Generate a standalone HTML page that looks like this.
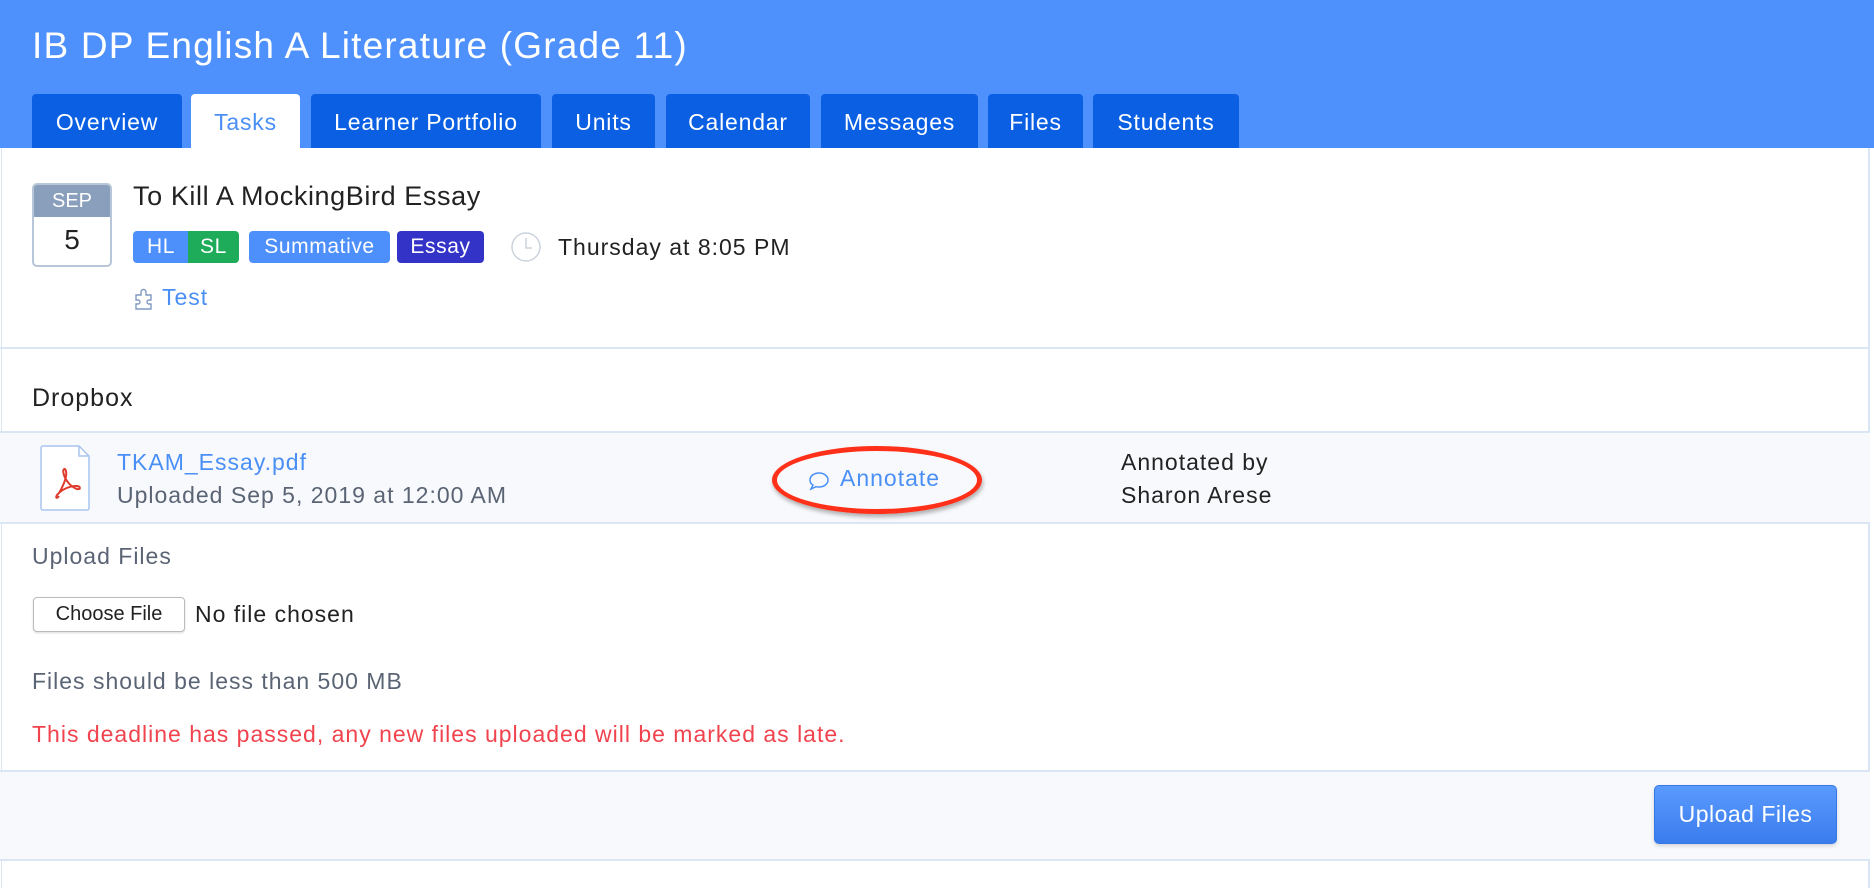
<!DOCTYPE html>
<html><head><meta charset="utf-8"><style>
*{box-sizing:border-box;margin:0;padding:0}
body{width:1874px;height:888px;background:#fff;font-family:"Liberation Sans",sans-serif;position:relative;overflow:hidden;color:#222}
.a{position:absolute;white-space:nowrap}
.t{font-size:23px;letter-spacing:1px}
.hdr{position:absolute;left:0;top:0;width:1874px;height:148px;background:#4f91fc}
.tab{position:absolute;top:94px;height:54px;background:#0a5fe3;color:#fff;font-size:23px;letter-spacing:.8px;line-height:56px;text-align:center;border-radius:4px 4px 0 0}
.tab.on{background:#fff;color:#4a8ff5}
.badge{position:absolute;top:231px;height:32px;color:#fff;font-size:21px;letter-spacing:.6px;line-height:32px;text-align:center}
</style></head><body>
<div class="hdr"></div>
<div class="a" style="left:32px;top:25px;font-size:37px;letter-spacing:1.2px;color:#fff">IB DP English A Literature (Grade 11)</div>
<div class="tab" style="left:32px;width:150px">Overview</div>
<div class="tab on" style="left:191px;width:109px">Tasks</div>
<div class="tab" style="left:311px;width:230px">Learner Portfolio</div>
<div class="tab" style="left:552px;width:103px">Units</div>
<div class="tab" style="left:666px;width:144px">Calendar</div>
<div class="tab" style="left:821px;width:157px">Messages</div>
<div class="tab" style="left:988px;width:95px">Files</div>
<div class="tab" style="left:1093px;width:146px">Students</div>
<div class="a" style="left:1px;top:148px;width:1px;height:740px;background:#dbe6f5"></div>
<div class="a" style="left:1868px;top:148px;width:2px;height:740px;background:#dbe6f5"></div>

<div class="a" style="left:32px;top:183px;width:80px;height:84px;border:2px solid #b8c6da;border-radius:5px;overflow:hidden;background:#fff">
<div style="background:#899fbb;height:32px;color:#fff;font-size:20px;line-height:32px;text-align:center">SEP</div>
<div style="font-size:28px;text-align:center;line-height:46px">5</div></div>
<div class="a" style="left:133px;top:181px;font-size:27px;letter-spacing:.6px">To Kill A MockingBird Essay</div>
<div class="badge" style="left:133px;width:56px;background:#4d8ffb;border-radius:4px 0 0 4px">HL</div>
<div class="badge" style="left:188px;width:51px;background:#1fac5a;border-radius:0 4px 4px 0">SL</div>
<div class="badge" style="left:249px;width:141px;background:#4d8ffb;border-radius:4px">Summative</div>
<div class="badge" style="left:397px;width:87px;background:#3333c8;border-radius:4px">Essay</div>
<svg class="a" style="left:510px;top:231px" width="32" height="32"><circle cx="16" cy="16" r="14" fill="none" stroke="#ccd3dd" stroke-width="1.5"/><path d="M16 7v10h6" fill="none" stroke="#ccd3dd" stroke-width="1.5"/></svg>
<div class="a t" style="left:558px;top:234px">Thursday at 8:05 PM</div>
<svg class="a" style="left:131px;top:286px" width="26" height="26" fill="none" stroke="#7f99c2" stroke-width="1.4"><path d="M5 9h5V6a2.5 2.5 0 0 1 5 0v3h5v5h-2a2 2 0 0 0 0 4h2v5H5v-5h2a2 2 0 0 0 0-4H5z"/></svg>
<div class="a t" style="left:162px;top:284px;color:#4a8ff5">Test</div>
<div class="a" style="left:0;top:347px;width:1870px;height:2px;background:#dbe6f5"></div>

<div class="a" style="left:32px;top:384px;font-size:25px;letter-spacing:1px">Dropbox</div>
<div class="a" style="left:0;top:431px;width:1870px;height:93px;background:#f8f9fc;border-top:2px solid #dbe6f5;border-bottom:2px solid #dbe6f5"></div>
<svg class="a" style="left:39px;top:445px" width="52" height="66"><path d="M2 3a2 2 0 0 1 2-2h36l10 10v52a2 2 0 0 1-2 2H4a2 2 0 0 1-2-2z" fill="#fff" stroke="#a9c4ef" stroke-width="1.5"/><path d="M40 1v10h10" fill="none" stroke="#a9c4ef" stroke-width="1.5"/><path d="M20 48c6-10 8-18 7-22-1-4-4-2-2 4 2 6 7 12 13 14 4 1 4-3-1-3-6 0-14 3-19 9-2 3 0 4 2 1" fill="none" stroke="#e03a2d" stroke-width="2"/></svg>
<div class="a t" style="left:117px;top:449px;color:#4a8ff5">TKAM_Essay.pdf</div>
<div class="a t" style="left:117px;top:482px;color:#5a6474">Uploaded Sep 5, 2019 at 12:00 AM</div>
<svg class="a" style="left:808px;top:470px" width="22" height="22" fill="none" stroke="#4a8ff5" stroke-width="1.5"><path d="M11 3c5 0 9 3 9 7s-4 7-9 7c-1 0-2 0-3-.3L3 19l2-4C3 14 2 12 2 10c0-4 4-7 9-7z"/></svg>
<div class="a t" style="left:840px;top:465px;color:#4a8ff5">Annotate</div>
<div class="a" style="left:772px;top:446px;width:210px;height:68px;border:5px solid #ff3019;border-radius:50%;box-shadow:1px 3px 4px rgba(0,0,0,.3)"></div>
<div class="a t" style="left:1121px;top:449px">Annotated by</div>
<div class="a t" style="left:1121px;top:482px">Sharon Arese</div>

<div class="a t" style="left:32px;top:543px;color:#5a6474">Upload Files</div>
<div class="a" style="left:33px;top:597px;width:152px;height:35px;border:1px solid #bbb;border-radius:4px;background:#fff;font-size:20px;line-height:33px;text-align:center;box-shadow:0 1px 2px rgba(0,0,0,.15)">Choose File</div>
<div class="a t" style="left:195px;top:601px">No file chosen</div>
<div class="a t" style="left:32px;top:668px;color:#5a6474">Files should be less than 500 MB</div>
<div class="a t" style="left:32px;top:721px;color:#f0434e">This deadline has passed, any new files uploaded will be marked as late.</div>
<div class="a" style="left:0;top:770px;width:1870px;height:91px;background:#f8f9fc;border-top:2px solid #dbe6f5;border-bottom:2px solid #dbe6f5"></div>
<div class="a" style="left:1654px;top:785px;width:183px;height:59px;border-radius:5px;background:linear-gradient(#5a9aff,#3a7cec);border:1px solid #3578e5;color:#fff;font-size:23px;letter-spacing:.5px;line-height:57px;text-align:center;box-shadow:0 2px 4px rgba(0,0,0,.15)">Upload Files</div>
</body></html>
